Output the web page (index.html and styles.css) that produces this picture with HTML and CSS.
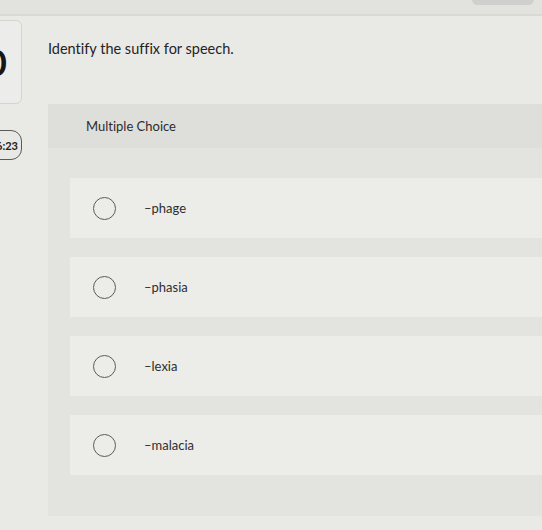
FILE: index.html
```html
<!DOCTYPE html>
<html lang="en">
<head>
<meta charset="utf-8">
<link rel="stylesheet" href="styles.css">
</head>
<body>
<div class="top"><div class="top-tab"></div></div>
<div class="main">
  <div class="side">
    <div class="num-card"><span class="num">0</span></div>
    <div class="timer">6:23</div>
  </div>
  <div class="content">
    <p class="question">Identify the suffix for speech.</p>
    <section class="panel">
      <div class="panel-head">Multiple Choice</div>
      <div class="options">
        <div class="option"><span class="radio"></span><span class="label">&#8211;phage</span></div>
        <div class="option"><span class="radio"></span><span class="label">&#8211;phasia</span></div>
        <div class="option"><span class="radio"></span><span class="label">&#8211;lexia</span></div>
        <div class="option"><span class="radio"></span><span class="label">&#8211;malacia</span></div>
      </div>
    </section>
  </div>
</div>
</body>
</html>
```
FILE: styles.css
```css
html, body {
  margin: 0;
  padding: 0;
}
body {
  width: 542px;
  height: 530px;
  overflow: hidden;
  background: #e9e9e6;
  font-family: Lato, "Open Sans", "Liberation Sans", sans-serif;
  font-variant-ligatures: none;
  color: #2e2e2e;
}
.top {
  height: 14px;
  background: #e2e2df;
  border-bottom: 2px solid #d9d9d6;
  position: relative;
}
.top-tab {
  position: absolute;
  right: 8px;
  top: -6px;
  width: 62px;
  height: 11px;
  border-radius: 6px;
  background: #cfcfcd;
}
.main {
  display: flex;
}
.side {
  width: 48px;
  flex: none;
}
.num-card {
  margin-top: 4px;
  margin-left: -18px;
  width: 40px;
  height: 84px;
  border: 1px solid #d3d3d0;
  border-radius: 6px;
  background: #ececea;
  display: flex;
  align-items: center;
  padding-left: 3px;
  box-sizing: border-box;
}
.num {
  font-size: 36px;
  font-weight: 700;
  color: #161616;
  line-height: 1;
}
.timer {
  margin-top: 26px;
  margin-left: -16px;
  width: 38px;
  height: 30px;
  box-sizing: border-box;
  border: 1.5px solid #5a5a58;
  border-radius: 11px;
  background: #e8e8e5;
  display: flex;
  align-items: center;
  justify-content: flex-end;
  padding-right: 3px;
  font-size: 11px;
  font-weight: 700;
  color: #222;
}
.content {
  flex: 1;
}
.question {
  margin: 0;
  padding-top: 23px;
  height: 65px;
  font-size: 14.5px;
  line-height: 20px;
  color: #242424;
}
.panel {
  background: #e3e3e0;
  padding-bottom: 41px;
}
.panel-head {
  height: 44px;
  background: #dededb;
  display: flex;
  align-items: center;
  padding-left: 38px;
  font-size: 13px;
  color: #2c2c2c;
}
.options {
  padding: 30px 0 0 22px;
  display: flex;
  flex-direction: column;
  gap: 19px;
}
.option {
  height: 60px;
  background: #ecece9;
  display: flex;
  align-items: center;
  padding-left: 23px;
}
.radio {
  width: 23px;
  height: 23px;
  box-sizing: border-box;
  border: 1.5px solid #5b5b5b;
  border-radius: 50%;
  flex: none;
}
.label {
  margin-left: 28px;
  font-size: 13px;
  color: #2e2e2e;
}
```
